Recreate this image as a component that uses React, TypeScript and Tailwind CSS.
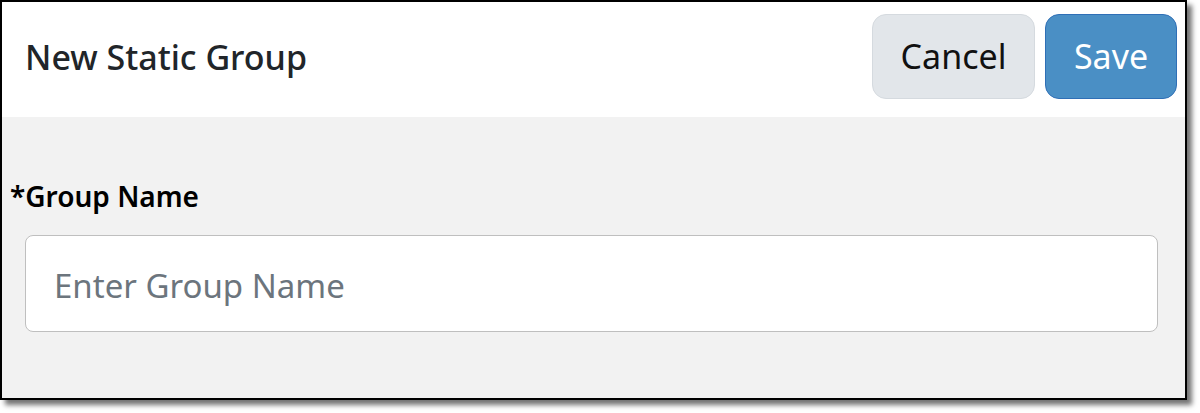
export default function App() {
  return (
    <div className="w-[1200px] h-[413px] bg-white" style={{ fontFamily: '"Noto Sans", "Open Sans", sans-serif' }}>
      <div className="w-[1187px] h-[400px] border-2 border-black bg-[#f2f2f2] flex flex-col shadow-[5px_5px_5px_rgba(0,0,0,0.55)]">
        <div className="h-[115px] bg-white flex items-start justify-between pl-[23px] pr-[8px] pt-[12px]">
          <div className="h-[85px] flex items-center pt-[2px] text-[34px] font-medium text-[#212529]">New Static Group</div>
          <div className="flex gap-[10px]">
            <button className="w-[163px] h-[85px] rounded-[14px] bg-[#e2e6ea] border border-[#d5dadf] text-[34px] text-[#111]">Cancel</button>
            <button className="w-[132px] h-[85px] rounded-[14px] bg-[#4a8fc5] border border-[#2f6fb6] text-[34px] text-white">Save</button>
          </div>
        </div>
        <div className="flex-1 flex flex-col pl-[8px] pr-[27px] pt-[61px]">
          <div className="text-[28px] font-semibold text-black leading-[36px]">*Group Name</div>
          <div className="mt-[21px] ml-[15px] h-[97px] rounded-[8px] border border-[#bfbfbf] bg-white flex items-center pl-[28px] pt-[4px] text-[33px] text-[#6c757d]">
            Enter Group Name
          </div>
        </div>
      </div>
    </div>
  );
}
